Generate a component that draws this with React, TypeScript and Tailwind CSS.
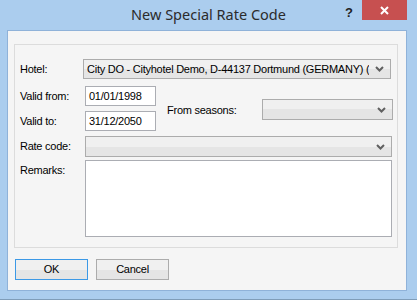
import React from "react";

const Chevron = () => (
  <svg width="9" height="6" viewBox="0 0 9 6" className="shrink-0">
    <path d="M1 1 L4.5 4.5 L8 1" fill="none" stroke="#606060" strokeWidth="2" />
  </svg>
);

const Combo = ({ text = "", className = "" }: { text?: string; className?: string }) => (
  <div
    className={`flex items-center justify-between gap-[6px] border border-[#acacac] bg-[linear-gradient(#f0f0f0_0%,#f0f0f0_50%,#e5e5e5_50%,#e5e5e5_100%)] pl-[3px] pr-[6px] ${className}`}
  >
    <span className="overflow-hidden whitespace-nowrap">{text}</span>
    <Chevron />
  </div>
);

const TextBox = ({ value }: { value: string }) => (
  <div className="flex h-[20px] w-[71px] items-center border border-[#abadb3] bg-white pl-[3px]">
    {value}
  </div>
);

export default function App() {
  return (
    <div
      className="relative flex h-[300px] w-[417px] flex-col border-b border-[#7f9db9] bg-[#abcdee] text-[11px] tracking-[-0.25px] text-black"
      style={{ fontFamily: '"Liberation Sans", Arial, sans-serif' }}
    >
      {/* TITLE BAR */}
      <div className="relative flex h-[30px] shrink-0 items-center justify-center tracking-normal">
        <span
          className="pb-[1px] text-[14.5px] text-[#2b2b2b]"
          style={{ fontFamily: '"Noto Sans", "Open Sans", sans-serif' }}
        >
          New Special Rate Code
        </span>
        <span className="absolute left-[345px] top-[3px] text-[13px] font-bold text-[#222]">?</span>
        <div className="absolute left-[362px] top-0 flex h-[20px] w-[45px] items-center justify-center bg-[#c75050]">
          <svg width="9" height="9" viewBox="0 0 9 9">
            <path d="M1 1 L8 8 M8 1 L1 8" stroke="white" strokeWidth="2" />
          </svg>
        </div>
      </div>

      {/* CLIENT AREA */}
      <div className="ml-[7px] h-[261px] w-[400px] border border-[#8fb2d9] bg-[#f5f5f5]">
        {/* GROUP BOX */}
        <div className="ml-[6px] mt-[13px] h-[204px] w-[384px] border border-[#dcdcdc] pl-[5px] pt-[14px]">
          {/* hotel */}
          <div className="flex h-[20px] items-center">
            <span className="w-[63px]">Hotel:</span>
            <Combo
              className="h-[20px] w-[308px]"
              text="City DO - Cityhotel Demo, D-44137 Dortmund (GERMANY) ("
            />
          </div>

          {/* validity + seasons */}
          <div className="mt-[7px] flex">
            <div className="flex flex-col gap-[5px]">
              <div className="flex h-[20px] items-center">
                <span className="w-[65px]">Valid from:</span>
                <TextBox value="01/01/1998" />
              </div>
              <div className="flex h-[20px] items-center">
                <span className="w-[65px]">Valid to:</span>
                <TextBox value="31/12/2050" />
              </div>
            </div>
            <div className="ml-[11px] flex items-center pt-[3px]">
              <span className="w-[95px]">From seasons:</span>
            </div>
            <Combo className="mt-[13px] h-[21px] w-[131px]" />
          </div>

          {/* rate code */}
          <div className="mt-[5px] flex h-[21px] items-center">
            <span className="w-[65px]">Rate code:</span>
            <Combo className="h-[21px] w-[307px]" />
          </div>

          {/* remarks */}
          <div className="mt-[3px] flex">
            <span className="w-[65px] pt-[2px]">Remarks:</span>
            <div className="h-[77px] w-[307px] border border-[#abadb3] bg-white" />
          </div>
        </div>

        {/* BUTTONS */}
        <div className="ml-[7px] mt-[11px] flex gap-[8px]">
          <button className="h-[21px] w-[73px] border border-[#3c99e6] bg-[linear-gradient(#f0f0f0_0%,#f0f0f0_50%,#e5e5e5_50%,#e5e5e5_100%)] text-[11px]">
            OK
          </button>
          <button className="h-[21px] w-[73px] border border-[#acacac] bg-[linear-gradient(#f0f0f0_0%,#f0f0f0_50%,#e5e5e5_50%,#e5e5e5_100%)] text-[11px]">
            Cancel
          </button>
        </div>
      </div>
    </div>
  );
}
